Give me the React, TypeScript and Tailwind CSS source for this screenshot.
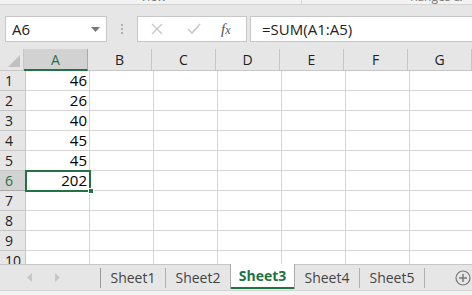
import React from "react";

const cols = ["A", "B", "C", "D", "E", "F", "G"];
const values: Record<number, string> = { 1: "46", 2: "26", 3: "40", 4: "45", 5: "45", 6: "202" };

export default function App() {
  const font = { fontFamily: '"Open Sans", "Noto Sans", sans-serif' };
  return (
    <div className="w-[472px] h-[295px] overflow-hidden bg-[#e6e6e6] relative" style={font}>
      {/* top strip */}
      <div className="h-[5px] bg-[#f3f3f3] border-b border-[#d4d4d4] relative overflow-hidden">
        <span className="absolute left-[140px] top-[-9px] text-[12px] text-[#7a7a7a] leading-[12px]">View</span>
        <span className="absolute left-[410px] top-[-9px] text-[12px] text-[#7a7a7a] leading-[12px]">Ranges &amp;</span>
        <div className="absolute left-[301px] top-0 w-px h-full bg-[#d4d4d4]" />
      </div>
      {/* formula bar */}
      <div className="h-[44px] flex items-start pt-[11px] pl-[5px]">
        <div className="w-[102px] h-[26px] bg-white border border-[#c6c6c6] flex items-center justify-between pl-[6px] pr-[6px]">
          <span className="text-[15px] text-[#222]">A6</span>
          <svg width="9" height="5" viewBox="0 0 9 5"><path d="M0 0 L9 0 L4.5 5 Z" fill="#777" /></svg>
        </div>
        <div className="w-[30px] h-[26px] flex flex-col items-center justify-center gap-[2px]">
          <div className="w-[2px] h-[2px] bg-[#b0b0b0]" />
          <div className="w-[2px] h-[2px] bg-[#b0b0b0]" />
          <div className="w-[2px] h-[2px] bg-[#b0b0b0]" />
        </div>
        <div className="w-[110px] h-[26px] bg-white border border-[#c6c6c6] flex items-center">
          <svg className="ml-[13px]" width="12" height="12" viewBox="0 0 12 12"><path d="M1 1 L11 11 M11 1 L1 11" stroke="#c8c8c8" strokeWidth="1.4" /></svg>
          <svg className="ml-[24px]" width="14" height="12" viewBox="0 0 14 12"><path d="M1 6 L5 10 L13 1" stroke="#c8c8c8" strokeWidth="1.6" fill="none" /></svg>
          <span className="ml-[20px] text-[15px] italic text-[#555]" style={{ fontFamily: '"Liberation Serif", serif' }}>f<span className="text-[12px]">x</span></span>
        </div>
        <div className="ml-[3px] flex-1 h-[26px] bg-white border border-[#c6c6c6] border-r-0 flex items-center pl-[11px]">
          <span className="text-[15px] text-[#222]">=SUM(A1:A5)</span>
        </div>
      </div>
      {/* grid */}
      <div className="h-[215px] overflow-hidden bg-white relative">
        {/* header row */}
        <div className="flex h-[22px] bg-[#e6e6e6]">
          <div className="w-[26px] h-full border-r border-b border-[#c6c6c6] relative">
            <svg className="absolute right-[3px] bottom-[3px]" width="12" height="12" viewBox="0 0 12 12"><path d="M12 0 L12 12 L0 12 Z" fill="#c0c0c0" /></svg>
          </div>
          {cols.map((c, i) => (
            <div
              key={c}
              className={
                i === 0
                  ? "w-[64px] shrink-0 h-full bg-[#d2d2d2] border-r border-[#ababab] border-b-2 border-b-[#217346] flex items-center justify-center text-[14px] text-[#217346]"
                  : "w-[64px] shrink-0 h-full border-r border-b border-[#c6c6c6] flex items-center justify-center text-[14px] text-[#222]"
              }
            >
              {c}
            </div>
          ))}
        </div>
        {Array.from({ length: 10 }, (_, r) => r + 1).map((r) => (
          <div key={r} className="flex h-[20px]">
            <div
              className={
                r === 6
                  ? "w-[26px] shrink-0 h-full bg-[#d2d2d2] border-r border-b border-[#ababab] flex items-center pl-[5px] text-[14px] text-[#217346]"
                  : "w-[26px] shrink-0 h-full bg-[#e6e6e6] border-r border-b border-[#c6c6c6] flex items-center pl-[5px] text-[14px] text-[#222]"
              }
            >
              {r}
            </div>
            {cols.map((c, i) => (
              <div key={c} className="w-[64px] shrink-0 h-full border-r border-b border-[#d4d4d4] flex items-center justify-end pr-[2px] text-[15px] text-black">
                {i === 0 ? values[r] ?? "" : ""}
              </div>
            ))}
          </div>
        ))}
        {/* selection */}
        <div className="absolute left-[25px] top-[121px] w-[66px] h-[22px] border-2 border-[#217346]" />
        <div className="absolute left-[88px] top-[139px] w-[6px] h-[6px] bg-[#217346] border border-white" />
      </div>
      {/* tab bar */}
      <div className="h-[26px] flex border-t border-[#c6c6c6] bg-[#e6e6e6]">
        <div className="w-[100px] h-full flex items-center">
          <svg className="ml-[27px]" width="5" height="9" viewBox="0 0 5 9"><path d="M5 0 L0 4.5 L5 9 Z" fill="#c6c6c6" /></svg>
          <svg className="ml-[23px]" width="5" height="9" viewBox="0 0 5 9"><path d="M0 0 L5 4.5 L0 9 Z" fill="#c6c6c6" /></svg>
        </div>
        <div className="w-px h-[20px] mt-[3px] bg-[#9a9a9a]" />
        {["Sheet1", "Sheet2", "Sheet3", "Sheet4", "Sheet5"].map((s) =>
          s === "Sheet3" ? (
            <div key={s} className="w-[65px] h-[25px] -mt-px bg-white border-x border-[#ababab] flex flex-col items-center">
              <div className="flex-1 flex items-center text-[14px] font-bold text-[#217346]">{s}</div>
              <div className="w-full h-[2px] bg-[#217346]" />
            </div>
          ) : (
            <div key={s} className="flex h-full">
              <div className="w-[64px] h-full flex items-center justify-center text-[14px] text-[#444]">{s}</div>
              {s !== "Sheet2" && <div className="w-px h-[20px] mt-[3px] bg-[#b0b0b0]" />}
            </div>
          )
        )}
        <div className="flex-1 flex items-center justify-end pr-[1px]">
          <svg width="16" height="16" viewBox="0 0 16 16">
            <circle cx="8" cy="8" r="7" fill="none" stroke="#777" strokeWidth="1.2" />
            <path d="M8 4 V12 M4 8 H12" stroke="#777" strokeWidth="1.5" />
          </svg>
        </div>
      </div>
      <div className="h-[5px] bg-[#f3f3f3] border-t border-[#d4d4d4]" />
    </div>
  );
}
